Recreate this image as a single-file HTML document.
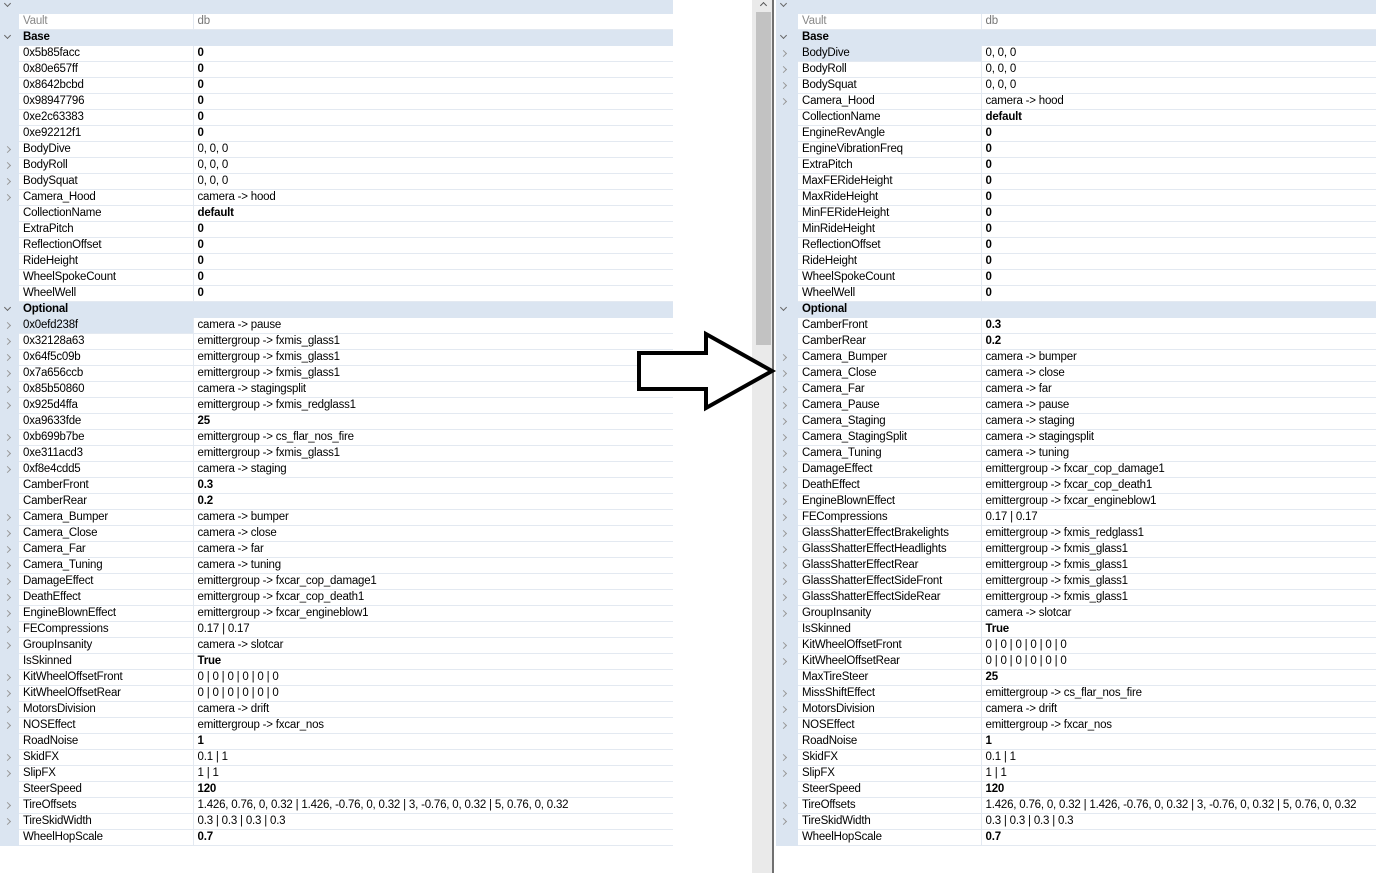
<!DOCTYPE html>
<html><head><meta charset="utf-8"><style>
body{margin:0;width:1381px;height:873px;background:#fff;position:relative;overflow:hidden;font-family:"Liberation Sans",sans-serif;font-size:11.5px;color:#000}
table{position:absolute;top:0;border-collapse:collapse;table-layout:fixed}
td{height:15px;padding:0 0 0 4px;border-bottom:1px solid #e3e9f1;white-space:nowrap;overflow:hidden;line-height:15px;letter-spacing:-0.2px}
td.m{background:#dbe5f1;border-bottom:1px solid #dbe5f1;padding:0;position:relative}
td.v{border-left:1px solid #e3e9f1}
tr.h td{background:#dbe5f1;border-bottom:1px solid #dbe5f1;font-weight:bold;height:15px}
tr.top td{height:13px;background:#dbe5f1;border-bottom:1px solid #dbe5f1}
tr.g td{color:#888}
tr.g td.v{color:#777}
td.b{font-weight:bold}
td.s{background:#dbe5f1}
tr.c td.m::before{content:"";position:absolute;left:5px;top:5px;width:4px;height:4px;border-right:1.5px solid #999;border-top:1.5px solid #999;transform:rotate(45deg)}
tr.x td.m::before,tr.top td.m::before{content:"";position:absolute;left:5px;top:3px;width:4px;height:4px;border-right:1.5px solid #666;border-bottom:1.5px solid #666;transform:rotate(45deg)}
tr.top td.m::before{top:1px}
#L{left:0;width:673px}
#R{left:776px;width:600px}
</style></head><body>
<table id="L"><colgroup><col style="width:19px"><col style="width:174px"><col style="width:480px"></colgroup>
<tr class="top"><td class="m"></td><td></td><td></td></tr>
<tr class="g"><td class="m"></td><td>Vault</td><td class="v">db</td></tr>
<tr class="h x"><td class="m"></td><td>Base</td><td></td></tr>
<tr><td class="m"></td><td>0x5b85facc</td><td class="v b">0</td></tr>
<tr><td class="m"></td><td>0x80e657ff</td><td class="v b">0</td></tr>
<tr><td class="m"></td><td>0x8642bcbd</td><td class="v b">0</td></tr>
<tr><td class="m"></td><td>0x98947796</td><td class="v b">0</td></tr>
<tr><td class="m"></td><td>0xe2c63383</td><td class="v b">0</td></tr>
<tr><td class="m"></td><td>0xe92212f1</td><td class="v b">0</td></tr>
<tr class="c"><td class="m"></td><td>BodyDive</td><td class="v">0, 0, 0</td></tr>
<tr class="c"><td class="m"></td><td>BodyRoll</td><td class="v">0, 0, 0</td></tr>
<tr class="c"><td class="m"></td><td>BodySquat</td><td class="v">0, 0, 0</td></tr>
<tr class="c"><td class="m"></td><td>Camera_Hood</td><td class="v">camera -&gt; hood</td></tr>
<tr><td class="m"></td><td>CollectionName</td><td class="v b">default</td></tr>
<tr><td class="m"></td><td>ExtraPitch</td><td class="v b">0</td></tr>
<tr><td class="m"></td><td>ReflectionOffset</td><td class="v b">0</td></tr>
<tr><td class="m"></td><td>RideHeight</td><td class="v b">0</td></tr>
<tr><td class="m"></td><td>WheelSpokeCount</td><td class="v b">0</td></tr>
<tr><td class="m"></td><td>WheelWell</td><td class="v b">0</td></tr>
<tr class="h x"><td class="m"></td><td>Optional</td><td></td></tr>
<tr class="c"><td class="m"></td><td class="s">0x0efd238f</td><td class="v">camera -&gt; pause</td></tr>
<tr class="c"><td class="m"></td><td>0x32128a63</td><td class="v">emittergroup -&gt; fxmis_glass1</td></tr>
<tr class="c"><td class="m"></td><td>0x64f5c09b</td><td class="v">emittergroup -&gt; fxmis_glass1</td></tr>
<tr class="c"><td class="m"></td><td>0x7a656ccb</td><td class="v">emittergroup -&gt; fxmis_glass1</td></tr>
<tr class="c"><td class="m"></td><td>0x85b50860</td><td class="v">camera -&gt; stagingsplit</td></tr>
<tr class="c"><td class="m"></td><td>0x925d4ffa</td><td class="v">emittergroup -&gt; fxmis_redglass1</td></tr>
<tr><td class="m"></td><td>0xa9633fde</td><td class="v b">25</td></tr>
<tr class="c"><td class="m"></td><td>0xb699b7be</td><td class="v">emittergroup -&gt; cs_flar_nos_fire</td></tr>
<tr class="c"><td class="m"></td><td>0xe311acd3</td><td class="v">emittergroup -&gt; fxmis_glass1</td></tr>
<tr class="c"><td class="m"></td><td>0xf8e4cdd5</td><td class="v">camera -&gt; staging</td></tr>
<tr><td class="m"></td><td>CamberFront</td><td class="v b">0.3</td></tr>
<tr><td class="m"></td><td>CamberRear</td><td class="v b">0.2</td></tr>
<tr class="c"><td class="m"></td><td>Camera_Bumper</td><td class="v">camera -&gt; bumper</td></tr>
<tr class="c"><td class="m"></td><td>Camera_Close</td><td class="v">camera -&gt; close</td></tr>
<tr class="c"><td class="m"></td><td>Camera_Far</td><td class="v">camera -&gt; far</td></tr>
<tr class="c"><td class="m"></td><td>Camera_Tuning</td><td class="v">camera -&gt; tuning</td></tr>
<tr class="c"><td class="m"></td><td>DamageEffect</td><td class="v">emittergroup -&gt; fxcar_cop_damage1</td></tr>
<tr class="c"><td class="m"></td><td>DeathEffect</td><td class="v">emittergroup -&gt; fxcar_cop_death1</td></tr>
<tr class="c"><td class="m"></td><td>EngineBlownEffect</td><td class="v">emittergroup -&gt; fxcar_engineblow1</td></tr>
<tr class="c"><td class="m"></td><td>FECompressions</td><td class="v">0.17 | 0.17</td></tr>
<tr class="c"><td class="m"></td><td>GroupInsanity</td><td class="v">camera -&gt; slotcar</td></tr>
<tr><td class="m"></td><td>IsSkinned</td><td class="v b">True</td></tr>
<tr class="c"><td class="m"></td><td>KitWheelOffsetFront</td><td class="v">0 | 0 | 0 | 0 | 0 | 0</td></tr>
<tr class="c"><td class="m"></td><td>KitWheelOffsetRear</td><td class="v">0 | 0 | 0 | 0 | 0 | 0</td></tr>
<tr class="c"><td class="m"></td><td>MotorsDivision</td><td class="v">camera -&gt; drift</td></tr>
<tr class="c"><td class="m"></td><td>NOSEffect</td><td class="v">emittergroup -&gt; fxcar_nos</td></tr>
<tr><td class="m"></td><td>RoadNoise</td><td class="v b">1</td></tr>
<tr class="c"><td class="m"></td><td>SkidFX</td><td class="v">0.1 | 1</td></tr>
<tr class="c"><td class="m"></td><td>SlipFX</td><td class="v">1 | 1</td></tr>
<tr><td class="m"></td><td>SteerSpeed</td><td class="v b">120</td></tr>
<tr class="c"><td class="m"></td><td>TireOffsets</td><td class="v">1.426, 0.76, 0, 0.32 | 1.426, -0.76, 0, 0.32 | 3, -0.76, 0, 0.32 | 5, 0.76, 0, 0.32</td></tr>
<tr class="c"><td class="m"></td><td>TireSkidWidth</td><td class="v">0.3 | 0.3 | 0.3 | 0.3</td></tr>
<tr><td class="m"></td><td>WheelHopScale</td><td class="v b">0.7</td></tr>
</table>

<div style="position:absolute;left:752px;top:0;width:20px;height:873px;background:#eaeaea"></div>
<div style="position:absolute;left:756px;top:12px;width:15px;height:333px;background:#c2c2c2"></div>
<div style="position:absolute;left:761px;top:3px;width:4px;height:4px;border-left:1.3px solid #555;border-top:1.3px solid #555;transform:rotate(45deg)"></div>
<div style="position:absolute;left:772px;top:0;width:2px;height:873px;background:#707070"></div>

<table id="R"><colgroup><col style="width:22px"><col style="width:183px"><col style="width:395px"></colgroup>
<tr class="top"><td class="m"></td><td></td><td></td></tr>
<tr class="g"><td class="m"></td><td>Vault</td><td class="v">db</td></tr>
<tr class="h x"><td class="m"></td><td>Base</td><td></td></tr>
<tr class="c"><td class="m"></td><td class="s">BodyDive</td><td class="v">0, 0, 0</td></tr>
<tr class="c"><td class="m"></td><td>BodyRoll</td><td class="v">0, 0, 0</td></tr>
<tr class="c"><td class="m"></td><td>BodySquat</td><td class="v">0, 0, 0</td></tr>
<tr class="c"><td class="m"></td><td>Camera_Hood</td><td class="v">camera -&gt; hood</td></tr>
<tr><td class="m"></td><td>CollectionName</td><td class="v b">default</td></tr>
<tr><td class="m"></td><td>EngineRevAngle</td><td class="v b">0</td></tr>
<tr><td class="m"></td><td>EngineVibrationFreq</td><td class="v b">0</td></tr>
<tr><td class="m"></td><td>ExtraPitch</td><td class="v b">0</td></tr>
<tr><td class="m"></td><td>MaxFERideHeight</td><td class="v b">0</td></tr>
<tr><td class="m"></td><td>MaxRideHeight</td><td class="v b">0</td></tr>
<tr><td class="m"></td><td>MinFERideHeight</td><td class="v b">0</td></tr>
<tr><td class="m"></td><td>MinRideHeight</td><td class="v b">0</td></tr>
<tr><td class="m"></td><td>ReflectionOffset</td><td class="v b">0</td></tr>
<tr><td class="m"></td><td>RideHeight</td><td class="v b">0</td></tr>
<tr><td class="m"></td><td>WheelSpokeCount</td><td class="v b">0</td></tr>
<tr><td class="m"></td><td>WheelWell</td><td class="v b">0</td></tr>
<tr class="h x"><td class="m"></td><td>Optional</td><td></td></tr>
<tr><td class="m"></td><td>CamberFront</td><td class="v b">0.3</td></tr>
<tr><td class="m"></td><td>CamberRear</td><td class="v b">0.2</td></tr>
<tr class="c"><td class="m"></td><td>Camera_Bumper</td><td class="v">camera -&gt; bumper</td></tr>
<tr class="c"><td class="m"></td><td>Camera_Close</td><td class="v">camera -&gt; close</td></tr>
<tr class="c"><td class="m"></td><td>Camera_Far</td><td class="v">camera -&gt; far</td></tr>
<tr class="c"><td class="m"></td><td>Camera_Pause</td><td class="v">camera -&gt; pause</td></tr>
<tr class="c"><td class="m"></td><td>Camera_Staging</td><td class="v">camera -&gt; staging</td></tr>
<tr class="c"><td class="m"></td><td>Camera_StagingSplit</td><td class="v">camera -&gt; stagingsplit</td></tr>
<tr class="c"><td class="m"></td><td>Camera_Tuning</td><td class="v">camera -&gt; tuning</td></tr>
<tr class="c"><td class="m"></td><td>DamageEffect</td><td class="v">emittergroup -&gt; fxcar_cop_damage1</td></tr>
<tr class="c"><td class="m"></td><td>DeathEffect</td><td class="v">emittergroup -&gt; fxcar_cop_death1</td></tr>
<tr class="c"><td class="m"></td><td>EngineBlownEffect</td><td class="v">emittergroup -&gt; fxcar_engineblow1</td></tr>
<tr class="c"><td class="m"></td><td>FECompressions</td><td class="v">0.17 | 0.17</td></tr>
<tr class="c"><td class="m"></td><td>GlassShatterEffectBrakelights</td><td class="v">emittergroup -&gt; fxmis_redglass1</td></tr>
<tr class="c"><td class="m"></td><td>GlassShatterEffectHeadlights</td><td class="v">emittergroup -&gt; fxmis_glass1</td></tr>
<tr class="c"><td class="m"></td><td>GlassShatterEffectRear</td><td class="v">emittergroup -&gt; fxmis_glass1</td></tr>
<tr class="c"><td class="m"></td><td>GlassShatterEffectSideFront</td><td class="v">emittergroup -&gt; fxmis_glass1</td></tr>
<tr class="c"><td class="m"></td><td>GlassShatterEffectSideRear</td><td class="v">emittergroup -&gt; fxmis_glass1</td></tr>
<tr class="c"><td class="m"></td><td>GroupInsanity</td><td class="v">camera -&gt; slotcar</td></tr>
<tr><td class="m"></td><td>IsSkinned</td><td class="v b">True</td></tr>
<tr class="c"><td class="m"></td><td>KitWheelOffsetFront</td><td class="v">0 | 0 | 0 | 0 | 0 | 0</td></tr>
<tr class="c"><td class="m"></td><td>KitWheelOffsetRear</td><td class="v">0 | 0 | 0 | 0 | 0 | 0</td></tr>
<tr><td class="m"></td><td>MaxTireSteer</td><td class="v b">25</td></tr>
<tr class="c"><td class="m"></td><td>MissShiftEffect</td><td class="v">emittergroup -&gt; cs_flar_nos_fire</td></tr>
<tr class="c"><td class="m"></td><td>MotorsDivision</td><td class="v">camera -&gt; drift</td></tr>
<tr class="c"><td class="m"></td><td>NOSEffect</td><td class="v">emittergroup -&gt; fxcar_nos</td></tr>
<tr><td class="m"></td><td>RoadNoise</td><td class="v b">1</td></tr>
<tr class="c"><td class="m"></td><td>SkidFX</td><td class="v">0.1 | 1</td></tr>
<tr class="c"><td class="m"></td><td>SlipFX</td><td class="v">1 | 1</td></tr>
<tr><td class="m"></td><td>SteerSpeed</td><td class="v b">120</td></tr>
<tr class="c"><td class="m"></td><td>TireOffsets</td><td class="v">1.426, 0.76, 0, 0.32 | 1.426, -0.76, 0, 0.32 | 3, -0.76, 0, 0.32 | 5, 0.76, 0, 0.32</td></tr>
<tr class="c"><td class="m"></td><td>TireSkidWidth</td><td class="v">0.3 | 0.3 | 0.3 | 0.3</td></tr>
<tr><td class="m"></td><td>WheelHopScale</td><td class="v b">0.7</td></tr>
</table>

<svg style="position:absolute;left:0;top:0" width="1381" height="873">
<polygon points="639,353 706,353 706,334 772,371 706,408 706,389 639,389" fill="#fff" stroke="#000" stroke-width="4" stroke-linejoin="miter"/>
</svg>
</body></html>
